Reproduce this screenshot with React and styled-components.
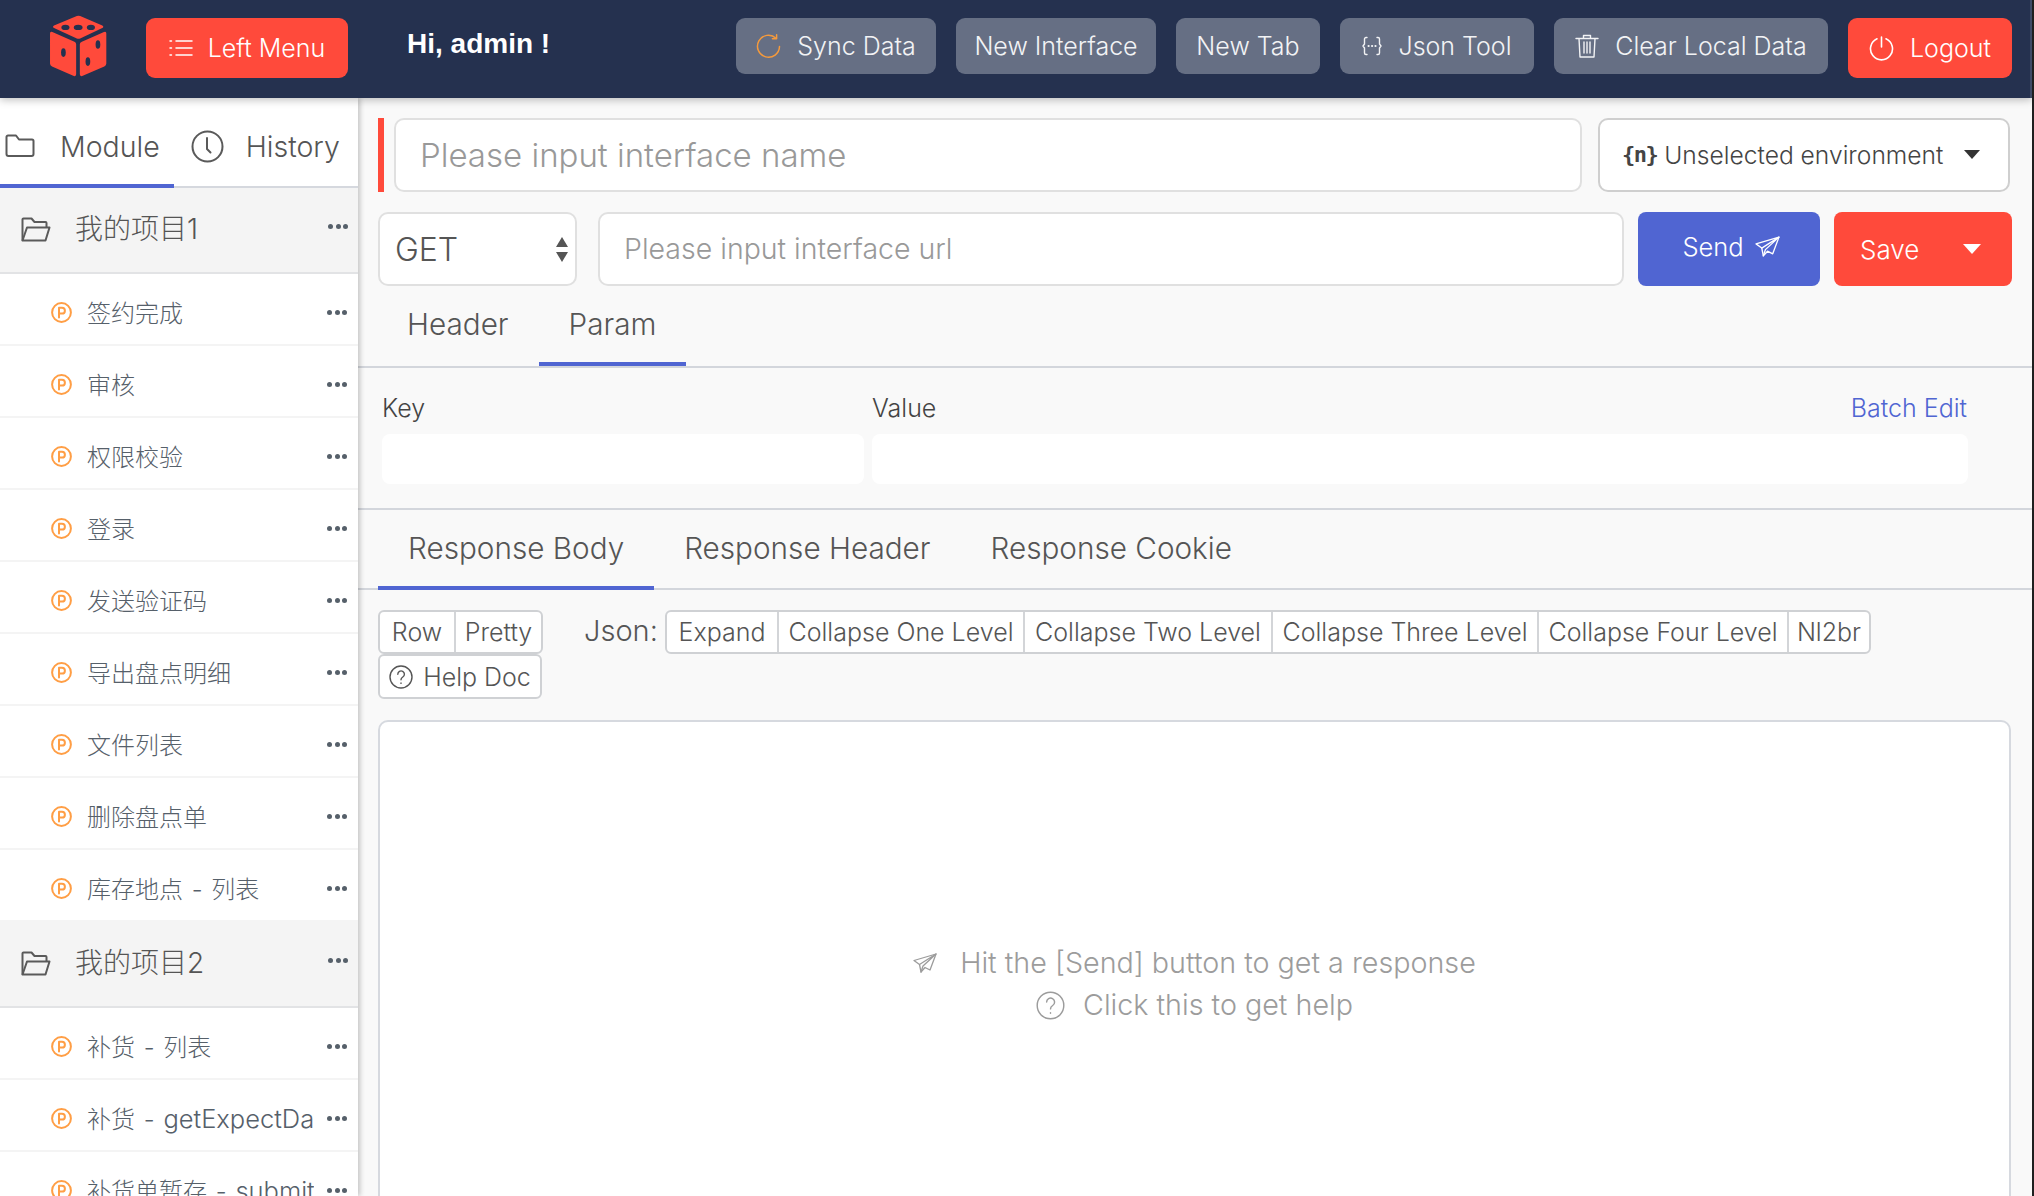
import React from "react";
import styled, { createGlobalStyle } from "styled-components";

const FONT = `Inter, "Liberation Sans", "Noto Sans CJK SC", sans-serif`;

const Global = createGlobalStyle`
  html, body { margin: 0; padding: 0; height: 100%; overflow: hidden; background: #1f1f1f; }
  #root { height: 100%; }
  * { box-sizing: border-box; }
`;

const Page = styled.div`
  width: 2032px; height: 1196px; overflow: hidden; background: #f9f9f9;
  font-family: ${FONT}; font-weight: 300; color: #555; display: flex; flex-direction: column;
`;

const TopBar = styled.header`
  position: relative; z-index: 3; flex: none; height: 98px; background: #25314f;
  display: flex; align-items: flex-start; padding: 18px 20px 0 50px;
  box-shadow: 0 2px 8px rgba(0,0,0,.25), inset -2px 0 0 #3f4a66;
`;
const Logo = styled.svg`
  width: 57px; height: 62px; margin: -3px 39px 0 0; flex: none;
`;
const TopBtn = styled.button`
  height: ${p => (p.$red ? 60 : 56)}px; width: ${p => p.$w}px; flex: none; border: 0; border-radius: 9px;
  background: ${p => (p.$red ? "#ff4a3b" : "#666f84")};
  color: ${p => (p.$red ? "#fff" : "#f2f3f5")}; font: 300 25px ${FONT};
  display: flex; align-items: center; justify-content: center; gap: ${p => p.$gap ?? 16}px; padding: 0;
`;
const Greeting = styled.div`
  font: 700 28px/52px "Liberation Sans", sans-serif; color: #fff; margin-left: 59px; letter-spacing: 0;
`;
const TopActions = styled.div`
  margin-left: auto; display: flex; gap: 20px; align-items: flex-start;
`;

const Body = styled.div`
  flex: 1; display: flex; min-height: 0;
`;
const Side = styled.aside`
  position: relative; z-index: 2; width: 358px; flex: none; background: #fff; overflow: hidden;
  box-shadow: 2px 0 5px rgba(0,0,0,.22);
`;
const SideTabs = styled.div`
  height: 90px; display: flex; border-bottom: 2px solid #d5d8de; position: relative; padding-top: 31px;
`;
const SideTab = styled.div`
  display: flex; align-items: center; height: 34px; font-size: 28.5px; color: #555; flex: none;
  margin-left: ${p => p.$ml}px; gap: ${p => p.$gap}px;
`;
const SideUnderline = styled.div`
  position: absolute; left: 0; bottom: -2px; width: 174px; height: 4px; background: #5065d2;
`;
const Group = styled.div`
  height: ${p => (p.$first ? 86 : 88)}px; background: #f4f4f4; border-bottom: 2px solid #e2e3e5;
  display: flex; align-items: center; padding: 0 10px ${p => (p.$first ? 2 : 0)}px 21px; font-size: 28px; color: #555;
`;
const GroupName = styled.span`
  margin-left: 24px; flex: 1; margin-top: -4px;
`;
const Item = styled.div`
  height: ${p => (p.$last ? 70 : 72)}px; border-bottom: ${p => (p.$last ? "0" : "2px solid #f4f4f4")};
  display: flex; align-items: center; padding: 6px 11px 0 51px; font-size: 24px; color: #56606a;
`;
const ItemName = styled.span`
  margin-left: 15px; width: 227px; white-space: nowrap; overflow: hidden; word-spacing: 2px;
  margin-top: ${p => p.$mt}px;
`;
const Latin = styled.span`
  font-size: 25.5px; word-spacing: 0;
`;
const Dots = styled.span`
  margin-left: auto; display: flex; gap: 2.5px; margin-top: ${p => p.$mt}px;
  i { width: 5px; height: 5px; border-radius: 50%; background: #56606a; display: block; }
`;

const Main = styled.main`
  flex: 1; min-width: 0; display: flex; flex-direction: column;
`;
const Row = styled.div`
  display: flex; align-items: stretch; flex: none; height: 74px;
  margin-top: ${p => p.$mt}px; padding-left: 20px; padding-right: 20px;
`;
const RedBar = styled.div`
  width: 6px; background: #ff4a3b; margin-right: 10px; flex: none;
`;
const Field = styled.input`
  flex: 1; min-width: 0; height: 74px; border: 2px solid #e0e0e0; border-radius: 10px; background: #fff;
  padding: 0 24px ${p => p.$pb || 0}px; font: 300 ${p => p.$fs}px ${FONT}; color: #555; outline: none;
  &::placeholder { color: #999; opacity: 1; }
`;
const EnvSelect = styled.div`
  width: 412px; flex: none; margin: 0 2px 0 16px; background: #fff; border: 2px solid #cfcfcf; border-radius: 10px;
  display: flex; align-items: center; padding: 0 28px 1px 22px; font-size: 24.6px; color: #444;
`;
const EnvMark = styled.b`
  font: 700 22px "DejaVu Sans Mono", monospace; margin-right: 7px; color: #444; letter-spacing: -1.5px;
`;
const Caret = styled.span`
  margin-left: auto; width: 0; height: 0; border-left: ${p => p.$s}px solid transparent; border-right: ${p => p.$s}px solid transparent;
  border-top: ${p => p.$s + 1}px solid ${p => p.$c};
`;
const MethodSelect = styled.div`
  width: 199px; flex: none; background: #fff; border: 2px solid #e0e0e0; border-radius: 10px; margin-right: 21px;
  display: flex; align-items: center; justify-content: space-between; padding: 0 7px 0 15px; font-size: 32px; color: #555;
`;
const Arrows = styled.span`
  display: flex; flex-direction: column; gap: 5px;
  i { display: block; width: 0; height: 0; border-left: 6.5px solid transparent; border-right: 6.5px solid transparent; }
  i:first-child { border-bottom: 10px solid #555; }
  i:last-child { border-top: 10px solid #555; }
`;
const SendBtn = styled.button`
  width: 182px; flex: none; margin-left: 14px; border: 0; border-radius: 8px; background: #5065d2; color: #fff;
  font: 300 25.5px ${FONT}; display: flex; align-items: center; justify-content: center; gap: 11px; padding: 0 0 6px 4px;
`;
const SaveBtn = styled.button`
  width: 178px; flex: none; margin-left: 14px; border: 0; border-radius: 8px; background: #ff4a3b; color: #fff;
  font: 300 26px ${FONT}; display: flex; align-items: center; padding: 0 31px 0 26px;
`;

const Tabs = styled.div`
  flex: none; height: ${p => p.$h}px; padding-left: ${p => p.$pl}px;
  display: flex; align-items: stretch; border-bottom: 2px solid #d3d6dc;
`;
const Tab = styled.div`
  padding: 0 30px; font-size: 29.7px; color: #555; display: flex; align-items: center; position: relative;
  padding-bottom: ${p => p.$pb}px;
  ${p => p.$active && `&::after { content: ""; position: absolute; left: 0; right: 0; bottom: ${p.$ub}px; height: 4px; background: #5065d2; }`}
`;

const KeyValue = styled.section`
  flex: none; height: 142px; border-bottom: 2px solid #d3d6dc; padding: 25px 64px 0 24px;
  display: grid; grid-template-columns: 482px 1fr; column-gap: 8px; grid-template-rows: 30px 50px; row-gap: 11px;
  font-size: 25px; color: #444;
`;
const ValueHead = styled.div`
  display: flex; justify-content: space-between;
`;
const BatchLink = styled.a`
  color: #5065d2; margin-right: 1px;
`;
const Blank = styled.div`
  background: #fff; border-radius: 8px;
`;

const Toolbar = styled.div`
  flex: none; padding: 20px 0 0 20px; height: 130px; display: flex; flex-wrap: wrap; align-content: flex-start; width: 1600px;
`;
const BtnGroup = styled.div`
  display: flex; height: ${p => p.$h || 44}px; background: #fff; border: 2px solid #cfd1d4; border-radius: 6px; font-size: 25px; color: #555;
`;
const GroupBtn = styled.div`
  padding: 0; display: flex; align-items: center; gap: 10px;
  width: ${p => p.$w}px; justify-content: center;
  & + & { border-left: 2px solid #d3d5d8; }
`;
const JsonLabel = styled.div`
  font-size: 29px; line-height: 42px; color: #555; margin: 0 8px 0 41px; width: 73px;
`;
const RowBreak = styled.div`
  flex-basis: 100%; height: 0;
`;

const ResponseBox = styled.div`
  flex: none; height: 528px; margin: 0 21px 0 20px; background: #fff; border: 2px solid #d6d9df; border-radius: 10px;
  display: flex; flex-direction: column; align-items: center; justify-content: center;
  font-size: 28.7px; line-height: 42px; color: #9c9c9c;
`;
const EmptyLine = styled.div`
  display: flex; align-items: center; gap: ${p => p.$gap}px; height: 42px;
`;

const Icon = styled.svg`
  flex: none; display: block; fill: none; stroke: ${p => p.$c || "currentColor"}; stroke-width: ${p => p.$sw || 1.6};
  stroke-linecap: round; stroke-linejoin: round;
  width: ${p => p.$w}px; height: ${p => p.$h || p.$w}px;
`;

const Plane = ({ w, h, c, sw }) => (
  <Icon $w={w} $h={h} $c={c} $sw={sw} viewBox="0 0 24 20">
    <path d="M23 1 1 7.5 6.5 11.5 8 19 12 14.5 17 17 23 1Z" />
    <path d="M23 1 6.5 11.5M23 1 10 13 8 19" />
  </Icon>
);
const Question = ({ w, c, sw }) => (
  <Icon $w={w} $c={c} $sw={sw} viewBox="0 0 24 24">
    <circle cx="12" cy="12" r="11" />
    <path d="M8.8 9.2a3.3 3.3 0 1 1 5 2.8c-1.2.8-1.8 1.5-1.8 2.8" />
    <path d="M12 18v.4" />
  </Icon>
);
const PBadge = () => (
  <Icon $w={21} $c="#ff9e45" $sw={2} viewBox="0 0 21 21">
    <circle cx="10.5" cy="10.5" r="9.4" />
    <path d="M8 15.5V5.8h3a2.8 2.8 0 0 1 0 5.8H8" strokeWidth="2" />
  </Icon>
);
const FolderOpen = () => (
  <Icon $w={30} $h={25} $c="#5a5a5a" $sw={2} viewBox="0 0 30 25">
    <path d="M1.5 23V2.5a1 1 0 0 1 1-1h8l3 3.5h11a1 1 0 0 1 1 1v4" />
    <path d="M1.5 23.5h23L28.5 10.5H6L1.5 23.5Z" />
  </Icon>
);
const ThreeDots = ({ mt }) => <Dots $mt={mt}><i /><i /><i /></Dots>;

const ITEMS1 = ["签约完成", "审核", "权限校验", "登录", "发送验证码", "导出盘点明细", "文件列表", "删除盘点单", "库存地点 - 列表"];
const ITEMS2 = [["补货 - 列表", ""], ["补货 - ", "getExpectData"], ["补货单暂存 - ", "submit"]];
const JSON_BTNS = [["Expand", 110], ["Collapse One Level", 246], ["Collapse Two Level", 248], ["Collapse Three Level", 266], ["Collapse Four Level", 250], ["Nl2br", 82]];

export default function App() {
  return (
    <Page>
      <Global />
      <TopBar>
        <Logo viewBox="60 45 170 185">
          <path fill="#ff4a3b" d="M140 48q5-2 10 0l66 28q6 4 0 8l-66 31q-5 2-10 0L72 84q-6-4 0-8Z" />
          <path fill="#ff4a3b" d="M60 100q0-7 7-4l66 29q5 2 5 7v90q0 7-7 5l-65-28q-6-3-6-9Z" />
          <path fill="#ff4a3b" d="M228 100q0-7-7-4l-66 29q-6 2-6 7v90q0 7 7 5l66-28q6-3 6-9Z" />
          <g fill="#25314f">
            <ellipse cx="106" cy="82" rx="12" ry="8" />
            <ellipse cx="144" cy="82" rx="13" ry="8" />
            <ellipse cx="182" cy="82" rx="12" ry="8" />
            <ellipse cx="100" cy="157" rx="7" ry="13" />
            <ellipse cx="203" cy="133" rx="7" ry="13" />
            <ellipse cx="173" cy="184" rx="7" ry="13" />
          </g>
        </Logo>
        <TopBtn $red $w={202} $gap={15}>
          <Icon $w={24} $h={18} $sw={1.5} viewBox="0 0 24 18">
            <path d="M7 2h16M7 9h16M7 16h16M1 2h1.5M1 9h1.5M1 16h1.5" />
          </Icon>
          Left Menu
        </TopBtn>
        <Greeting>Hi, admin !</Greeting>
        <TopActions>
          <TopBtn $w={200}>
            <Icon $w={25} $c="#f59a3c" $sw={1.5} viewBox="0 0 25 25">
              <path d="M20 4.2A11 11 0 1 0 23.5 12.5" />
              <path d="M20.6 .8v4h-4.2" />
            </Icon>
            Sync Data
          </TopBtn>
          <TopBtn $w={200}>New Interface</TopBtn>
          <TopBtn $w={144}>New Tab</TopBtn>
          <TopBtn $w={194}>
            <Icon $w={20} $sw={1.4} viewBox="0 0 20 20">
              <path d="M5 1.5H4a1.5 1.5 0 0 0-1.5 1.5v5L1 10l1.5 2v5A1.5 1.5 0 0 0 4 18.5h1M15 1.5h1A1.5 1.5 0 0 1 17.5 3v5L19 10l-1.5 2v5a1.5 1.5 0 0 1-1.5 1.5h-1" />
              <path d="M6.5 10h.2M10 10h.2M13.4 10h.2" strokeWidth="2" />
            </Icon>
            Json Tool
          </TopBtn>
          <TopBtn $w={274}>
            <Icon $w={24} $sw={1.4} viewBox="0 0 24 24">
              <path d="M1 4.5h22M8.5 4.5V1.5h7v3M4 4.5 5 23h14l1-18.5M9 8v11M12 8v11M15 8v11" />
            </Icon>
            Clear Local Data
          </TopBtn>
          <TopBtn $red $w={164}>
            <Icon $w={25} $sw={1.6} viewBox="0 0 25 25">
              <path d="M8 2.8a11 11 0 1 0 9 0M12.5 1v10" />
            </Icon>
            Logout
          </TopBtn>
        </TopActions>
      </TopBar>
      <Body>
        <Side>
          <SideTabs>
            <SideTab $ml={5} $gap={25}>
              <Icon $w={30} $h={24} $c="#5a5a5a" $sw={2} viewBox="0 0 30 24">
                <path d="M1.5 3a1.5 1.5 0 0 1 1.5-1.5h8l3 4h13a1.5 1.5 0 0 1 1.5 1.5v13a2 2 0 0 1-2 2H3.5a2 2 0 0 1-2-2Z" />
              </Icon>
              Module
            </SideTab>
            <SideTab $ml={31} $gap={22}>
              <Icon $w={33} $c="#5a5a5a" $sw={2} viewBox="0 0 33 33">
                <circle cx="16.5" cy="16.5" r="15" />
                <path d="M16 8v11l3.5 3.5" />
              </Icon>
              History
            </SideTab>
            <SideUnderline />
          </SideTabs>
          <Group $first>
            <FolderOpen />
            <GroupName>我的项目1</GroupName>
            <ThreeDots mt={-5} />
          </Group>
          {ITEMS1.map((t, i) => (
            <Item key={t} $last={i === ITEMS1.length - 1}>
              <PBadge />
              <ItemName $mt={-1}>{t}</ItemName>
              <ThreeDots mt={1} />
            </Item>
          ))}
          <Group>
            <FolderOpen />
            <GroupName>我的项目2</GroupName>
            <ThreeDots mt={-5} />
          </Group>
          {ITEMS2.map(([a, b]) => (
            <Item key={a + b}>
              <PBadge />
              <ItemName $mt={-1}>{a}{b && <Latin>{b}</Latin>}</ItemName>
              <ThreeDots mt={1} />
            </Item>
          ))}
        </Side>
        <Main>
          <Row $mt={20}>
            <RedBar />
            <Field $fs={33} placeholder="Please input interface name" />
            <EnvSelect>
              <EnvMark>{"{n}"}</EnvMark>
              Unselected environment
              <Caret $c="#333" $s={8} />
            </EnvSelect>
          </Row>
          <Row $mt={20}>
            <MethodSelect>GET<Arrows><i /><i /></Arrows></MethodSelect>
            <Field $fs={28.5} $pb={2} placeholder="Please input interface url" />
            <SendBtn>
              Send
              <Plane w={25} h={21} sw={1.3} />
            </SendBtn>
            <SaveBtn>Save<Caret $c="#fff" $s={9.5} /></SaveBtn>
          </Row>
          <Tabs $h={82} $pl={19}>
            <Tab $pb={4}>Header</Tab>
            <Tab $pb={4} $active $ub={0}>Param</Tab>
          </Tabs>
          <KeyValue>
            <div>Key</div>
            <ValueHead>Value<BatchLink>Batch Edit</BatchLink></ValueHead>
            <Blank />
            <Blank />
          </KeyValue>
          <Tabs $h={80} $pl={20}>
            <Tab $pb={2} $active $ub={-2}>Response Body</Tab>
            <Tab $pb={2}>Response Header</Tab>
            <Tab $pb={2}>Response Cookie</Tab>
          </Tabs>
          <Toolbar>
            <BtnGroup>
              <GroupBtn $w={74}>Row</GroupBtn>
              <GroupBtn $w={87}>Pretty</GroupBtn>
            </BtnGroup>
            <JsonLabel>Json:</JsonLabel>
            <BtnGroup>
              {JSON_BTNS.map(([t, w]) => <GroupBtn key={t} $w={w}>{t}</GroupBtn>)}
            </BtnGroup>
            <RowBreak />
            <BtnGroup $h={45}>
              <GroupBtn $w={160}><Question w={24} sw={1.4} />Help Doc</GroupBtn>
            </BtnGroup>
          </Toolbar>
          <ResponseBox>
            <EmptyLine $gap={23}>
              <Plane w={24} h={20} sw={1.3} />
              Hit the [Send] button to get a response
            </EmptyLine>
            <EmptyLine $gap={18}>
              <Question w={29} sw={1.2} />
              Click this to get help
            </EmptyLine>
          </ResponseBox>
        </Main>
      </Body>
    </Page>
  );
}
